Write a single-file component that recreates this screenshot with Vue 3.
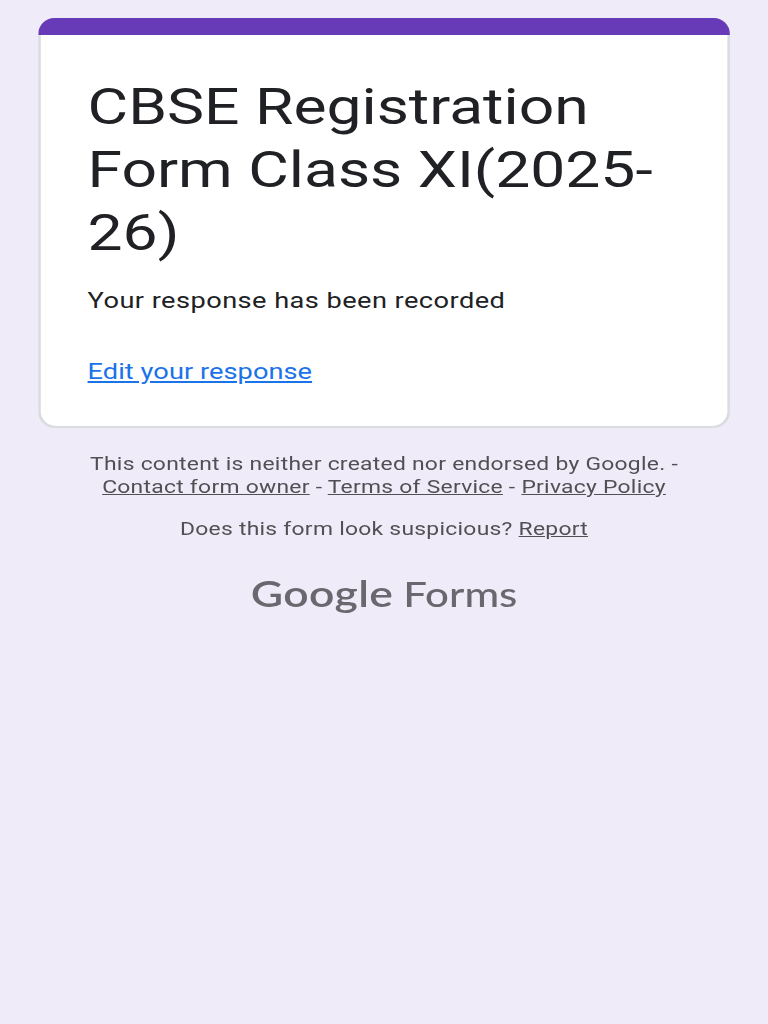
<script setup>
const links = ['Contact form owner', 'Terms of Service', 'Privacy Policy']
</script>

<template>
  <main class="page">
    <div class="stretch">
      <section class="card">
        <div class="band"></div>
        <div class="body">
          <h1 class="title">CBSE Registration Form Class XI(2025-26)</h1>
          <p class="message">Your response has been recorded</p>
          <a class="edit" href="#">Edit your response</a>
        </div>
      </section>
      <footer class="footer">
        <p class="line">This content is neither created nor endorsed by Google. -<br />
          <template v-for="(l, i) in links" :key="l">
            <a href="#" class="flink">{{ l }}</a><span v-if="i < links.length - 1"> - </span>
          </template>
        </p>
        <p class="line second">Does this form look suspicious? <a href="#" class="flink">Report</a></p>
        <div class="logo"><span class="google">Google</span><span class="forms">Forms</span></div>
      </footer>
    </div>
  </main>
</template>

<style>
html, body { margin: 0; background: #f0ebf8; }
</style>

<style scoped>
.page {
  min-height: 1024px;
  box-sizing: border-box;
  padding-top: 18px;
  background: #f0ebf8;
  font-family: Roboto, "Liberation Sans", sans-serif;
  overflow: hidden;
}
/* the reference is widened: all content is drawn 1.235x wide */
.stretch {
  width: 621.9px;
  box-sizing: border-box;
  padding: 0 30.8px;
  transform: scaleX(1.235);
  transform-origin: left top;
}
.card {
  background: #dadce0;
  border-radius: 13px / 16px;
  overflow: hidden;
  padding-bottom: 2px;
}
.band {
  height: 16.5px;
  background: #673ab7;
}
.body {
  margin: 0 2px;
  padding: 40.5px 38.1px 38px;
  background: #fff;
  border-radius: 0 0 12px 12px / 0 0 15px 15px;
}
.title {
  margin: 0;
  font-size: 50.5px;
  line-height: 63px;
  font-weight: 400;
  color: #202124;
}
.message {
  margin: 21px 0 0;
  font-size: 22px;
  line-height: 32px;
  color: #202124;
  letter-spacing: 0.37px;
}
.edit {
  display: block;
  margin-top: 39px;
  font-size: 22px;
  line-height: 32px;
  color: #1a73e8;
  letter-spacing: 0.05px;
}
.footer { text-align: center; color: #505054; margin-top: 25px; }
.line {
  margin: 0;
  font-size: 18.5px;
  line-height: 23px;
  letter-spacing: 0.22px;
}
.second { margin-top: 19px; }
.flink { color: #505054; }
.logo {
  margin-top: 30px;
  color: #6a686e;
  display: flex;
  justify-content: center;
  align-items: baseline;
  gap: 8px;
}
.google { font-family: Lato, sans-serif; font-size: 36px; font-weight: 600; letter-spacing: 0.3px; }
.forms { font-family: Lato, sans-serif; font-size: 34px; font-weight: 500; }
</style>
